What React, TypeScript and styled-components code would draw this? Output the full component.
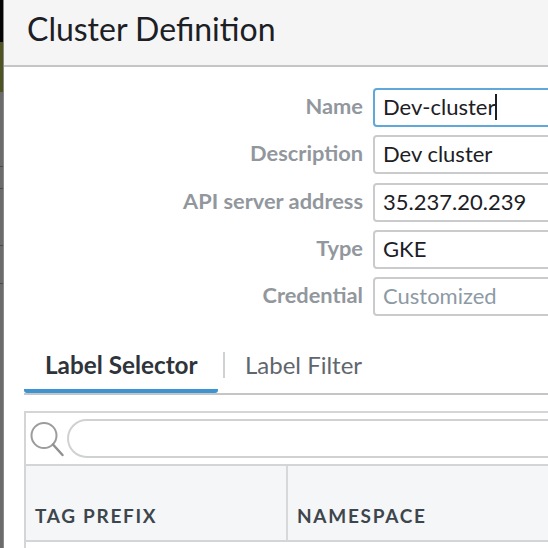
import React from "react";
import styled, { createGlobalStyle } from "styled-components";

const Global = createGlobalStyle`
  html, body { margin: 0; padding: 0; background: #fff; }
  body { font-family: Lato, "Open Sans", sans-serif; }
`;

const Page = styled.div`
  width: 548px; height: 548px; overflow: hidden; display: flex; background: #fff;
`;
const Backdrop = styled.div`
  width: 3px; flex: none; display: flex; flex-direction: column; background: #6b6b6b; border-right: 1px solid #8a8a8a;
`;
const BackdropBand = styled.div<{ $h: number; $c: string }>`
  height: ${p => p.$h}px; background: ${p => p.$c}; flex: none;
`;
const Dialog = styled.div`
  flex: 1; min-width: 0; display: flex; flex-direction: column;
`;
const Header = styled.header`
  height: 55px; flex: none; padding: 10px 0 0 23px;
  background: #f5f5f6; border-bottom: 2px solid #c3c5c7;
`;
const Title = styled.h1`
  margin: 0; font: 400 32px/38px Lato, sans-serif; color: #1c2024; white-space: nowrap;
`;
const Form = styled.div`
  display: flex; flex-direction: column; gap: 8.25px; padding-top: 21px; width: 640px;
`;
const Row = styled.div`
  display: flex; align-items: center; gap: 10px;
`;
const Label = styled.label`
  width: 359px; flex: none; text-align: right; padding-bottom: 3px; font: 700 21.8px/36px Lato, sans-serif; color: #91979d; white-space: nowrap;
`;
const Field = styled.div<{ $focus?: boolean; $muted?: boolean }>`
  box-sizing: border-box; width: 260px; height: 39px; padding: 0 8px 2px; flex: none;
  border: 2px solid ${p => (p.$focus ? "#5fa8d8" : "#c9cbcd")}; border-radius: 4px;
  font: 400 22px/33px Lato, sans-serif; color: ${p => (p.$muted ? "#8d9aa5" : "#1c2024")};
  white-space: nowrap; display: flex; align-items: center;
`;
const Caret = styled.span`
  display: inline-block; width: 1.5px; height: 26px; background: #1c2024;
`;
const Tabs = styled.div`
  margin: 26px 0 0 20px; height: 51px; display: flex; align-items: flex-start; border-bottom: 2px solid #c3c5c7;
`;
const Tab = styled.div<{ $active?: boolean }>`
  box-sizing: border-box; height: 51px; width: 194px; padding-left: 21px; flex: none;
  font: ${p => (p.$active ? 700 : 400)} ${p => (p.$active ? 24.3 : 24)}px/45px Lato, sans-serif;
  color: ${p => (p.$active ? "#2e343a" : "#5f676e")}; white-space: nowrap;
  border-bottom: ${p => (p.$active ? "4px solid #3d94d1" : "none")};
  border-radius: 0 0 3px 3px;
`;
const TabPlain = styled(Tab)`
  width: auto; padding-left: 20px;
`;
const Divider = styled.span`
  width: 2px; height: 26px; margin: 10px 0 0 5px; background: #cfd1d3; flex: none;
`;
const Panel = styled.div`
  margin: 16px 0 0 20px; border: 2px solid #d3d5d7; border-width: 2px 0 0 2px; flex: 1; display: flex; flex-direction: column;
`;
const SearchRow = styled.div`
  height: 51px; flex: none; display: flex; align-items: center; gap: 2px; padding: 0 0 0 3px; border-bottom: 2px solid #d3d5d7;
`;
const SearchIcon = styled.svg`
  width: 36px; height: 36px; flex: none;
`;
const SearchInput = styled.div`
  box-sizing: border-box; width: 560px; height: 39px; flex: none; border: 2px solid #cfd1d3; border-radius: 20px;
`;
const HeaderRow = styled.div`
  height: 74px; flex: none; display: flex; background: #f5f6f7; border-bottom: 2px solid #d3d5d7;
`;
const Column = styled.div<{ $w: number }>`
  box-sizing: border-box; width: ${p => p.$w}px; flex: none; padding: 0 0 12px 9px;
  display: flex; align-items: flex-end;
  border-right: 2px solid #d6d8da;
  font: 700 19px/24px Lato, sans-serif; letter-spacing: 1.7px; color: #3e464d; white-space: nowrap;
`;
const LastColumn = styled(Column)`
  border-right: none;
`;

export default function App() {
  return (
    <Page>
      <Global />
      <Backdrop>
        <BackdropBand $h={42} $c="#050505" />
        <BackdropBand $h={50} $c="#4e5320" />
        <BackdropBand $h={74} $c="#6b6b6b" />
        <BackdropBand $h={1} $c="#4a4a4a" />
        <BackdropBand $h={21} $c="#6b6b6b" />
        <BackdropBand $h={1} $c="#4a4a4a" />
        <BackdropBand $h={56} $c="#6b6b6b" />
        <BackdropBand $h={1} $c="#4a4a4a" />
        <BackdropBand $h={37} $c="#6b6b6b" />
        <BackdropBand $h={1} $c="#4a4a4a" />
      </Backdrop>
      <Dialog>
        <Header>
          <Title>Cluster Definition</Title>
        </Header>
        <Form>
          <Row>
            <Label>Name</Label>
            <Field $focus>Dev-cluster<Caret /></Field>
          </Row>
          <Row>
            <Label>Description</Label>
            <Field>Dev cluster</Field>
          </Row>
          <Row>
            <Label>API server address</Label>
            <Field>35.237.20.239</Field>
          </Row>
          <Row>
            <Label>Type</Label>
            <Field>GKE</Field>
          </Row>
          <Row>
            <Label>Credential</Label>
            <Field $muted>Customized</Field>
          </Row>
        </Form>
        <Tabs>
          <Tab $active>Label Selector</Tab>
          <Divider />
          <TabPlain>Label Filter</TabPlain>
        </Tabs>
        <Panel>
          <SearchRow>
            <SearchIcon viewBox="0 0 36 36" fill="none">
              <circle cx="15" cy="14.5" r="12.5" stroke="#9a9c9e" strokeWidth="2" />
              <path d="M24 23.5 L33.5 34" stroke="#8f9193" strokeWidth="2.5" strokeLinecap="round" />
            </SearchIcon>
            <SearchInput />
          </SearchRow>
          <HeaderRow>
            <Column $w={262}>TAG PREFIX</Column>
            <LastColumn $w={300}>NAMESPACE</LastColumn>
          </HeaderRow>
        </Panel>
      </Dialog>
    </Page>
  );
}
